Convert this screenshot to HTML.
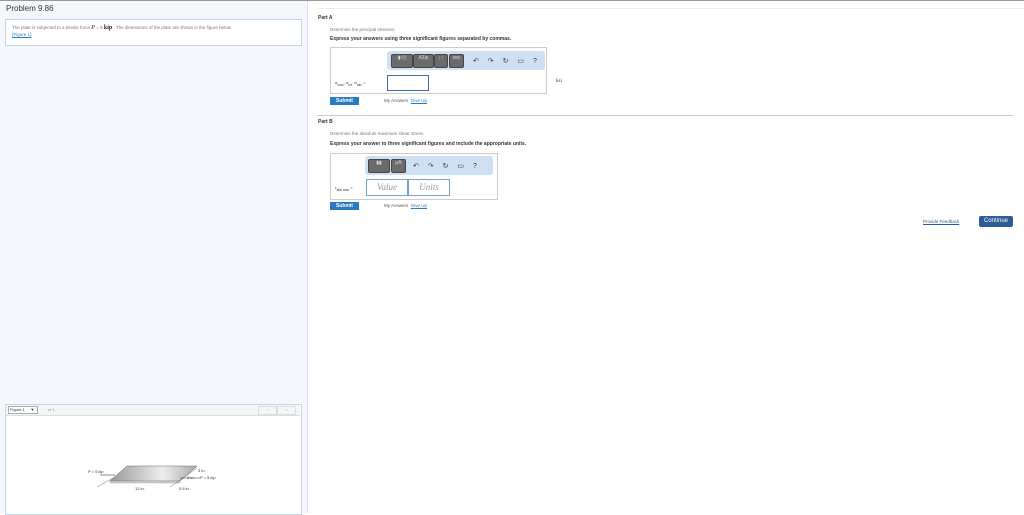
<!DOCTYPE html>
<html><head><style>
body{margin:0;width:1024px;height:513px;background:#fff;font-family:"Liberation Sans",sans-serif;position:relative;overflow:hidden;font-size:5px;color:#333}
.a{position:absolute}
.btn{background:#2a7ac0;color:#fff;font-weight:bold;font-size:5px;text-align:center;line-height:8px}
.tb{background:#cfe0f5;border-radius:3px}
.k{background:#6b6b6b;border:1px solid #444;border-radius:2px;color:#ddd;font-size:5px;text-align:center}
</style></head><body>
<div class="a" style="left:0;top:0;width:1024px;height:1px;background:#999"></div>
<div class="a" style="left:0;top:1px;width:307px;height:512px;background:#f4f8fd;border-right:1px solid #dde5ee"></div>
<div class="a" style="left:6px;top:4px;font-size:8px;color:#333">Problem 9.86</div>
<div class="a" style="left:5px;top:19px;width:295px;height:25px;background:#fff;border:1px solid #c5d3e3"></div>
<div class="a" style="left:12px;top:25px;font-size:4.5px;color:#777;white-space:nowrap">The plate is subjected to a tensile force <i style="font-family:'Liberation Serif';font-size:6px;color:#222">P</i> = 5 <b style="font-family:'Liberation Serif';font-size:6px;color:#222">kip</b> . The dimensions of the plate are shown in the figure below.</div>
<div class="a" style="left:12px;top:32px;font-size:4.5px;color:#2a7ac0;text-decoration:underline">(Figure 1)</div>
<div class="a" style="left:5px;top:404px;width:295px;height:109px;background:#fff;border:1px solid #c5d3e3"></div>
<div class="a" style="left:6px;top:405px;width:294px;height:10px;background:#f6f6f6;border-bottom:1px solid #ddd"></div>
<div class="a" style="left:8px;top:406px;width:28px;height:6px;border:1px solid #aaa;background:#fff;font-size:4px;color:#333;line-height:6px">&nbsp;Figure 1 &nbsp;&nbsp;&nbsp;&nbsp;▼</div>
<div class="a" style="left:48px;top:407px;font-size:4px;color:#888">of 1</div>
<div class="a" style="left:258px;top:406px;width:17px;height:7px;border:1px solid #ddd;font-size:4px;color:#aaa;text-align:center">&lt;</div>
<div class="a" style="left:277px;top:406px;width:17px;height:7px;border:1px solid #ddd;font-size:4px;color:#aaa;text-align:center">&gt;</div>
<svg class="a" style="left:85px;top:460px" width="140" height="35" viewBox="0 0 140 35">
<defs><linearGradient id="g" x1="0" x2="1"><stop offset="0" stop-color="#999"/><stop offset=".6" stop-color="#eee"/><stop offset="1" stop-color="#aaa"/></linearGradient></defs>
<polygon points="42,6 112,6 95,21 25,21" fill="url(#g)" stroke="#666" stroke-width=".5"/>
<rect x="25" y="21" width="70" height="2" fill="#ccc" stroke="#888" stroke-width=".3"/>
<line x1="12" y1="27" x2="30" y2="17" stroke="#555" stroke-width=".4"/>
<line x1="85" y1="27" x2="112" y2="8" stroke="#555" stroke-width=".4"/>
<line x1="15" y1="15" x2="30" y2="15" stroke="#333" stroke-width=".6"/>
<line x1="95" y1="18" x2="115" y2="18" stroke="#333" stroke-width=".6"/>
<text x="3" y="13" font-size="4" fill="#333">P = 5 kip</text>
<text x="115" y="19" font-size="4" fill="#333">P = 5 kip</text>
<text x="113" y="12" font-size="4" fill="#333">3 in.</text>
<text x="102" y="19" font-size="4" fill="#333">2 in.</text>
<text x="50" y="30" font-size="4" fill="#333">12 in.</text>
<text x="94" y="30" font-size="4" fill="#333">0.5 in.</text>
</svg>

<div class="a" style="left:317px;top:8px;width:707px;height:1px;background:#eee"></div>
<div class="a" style="left:318px;top:15px;font-size:5px;font-weight:bold;color:#333">Part A</div>
<div class="a" style="left:330px;top:27px;font-size:4.5px;color:#777">Determine the principal stresses.</div>
<div class="a" style="left:330px;top:36px;font-size:5px;font-weight:bold;color:#333">Express your answers using three significant figures separated by commas.</div>
<div class="a" style="left:330px;top:47px;width:215px;height:45px;border:1px solid #ccc;background:#fff"></div>
<div class="a tb" style="left:387px;top:51px;width:158px;height:19px"></div>
<div class="a k" style="left:391px;top:54px;width:20px;height:12px">▮√▯</div>
<div class="a k" style="left:413px;top:54px;width:19px;height:12px">ΑΣφ</div>
<div class="a k" style="left:434px;top:54px;width:12px;height:12px">↓↑</div>
<div class="a k" style="left:449px;top:54px;width:13px;height:12px">vec</div>
<div class="a" style="left:473px;top:57px;font-size:7px;color:#333;word-spacing:7px">↶ ↷ ↻ ▭ ?</div>
<div class="a" style="left:335px;top:80px;font-size:4px;color:#333">σ<sub>max</sub>, σ<sub>int</sub>, σ<sub>min</sub> =</div>
<div class="a" style="left:387px;top:75px;width:40px;height:14px;border:1px solid #3a6eb0;background:#fff"></div>
<div class="a" style="left:556px;top:79px;font-size:5px;color:#333;font-family:'Liberation Serif'">ksi</div>
<div class="a btn" style="left:330px;top:97px;width:29px;height:8px">Submit</div>
<div class="a" style="left:384px;top:98px;font-size:4.5px;color:#555">My Answers &nbsp;<span style="color:#2a7ac0;text-decoration:underline">Give Up</span></div>

<div class="a" style="left:317px;top:115px;width:697px;height:1px;background:#ccc"></div>
<div class="a" style="left:318px;top:119px;font-size:5px;font-weight:bold;color:#333">Part B</div>
<div class="a" style="left:330px;top:131px;font-size:4.5px;color:#777">Determine the absolute maximum shear stress.</div>
<div class="a" style="left:330px;top:141px;font-size:5px;font-weight:bold;color:#333">Express your answer to three significant figures and include the appropriate units.</div>
<div class="a" style="left:330px;top:153px;width:166px;height:45px;border:1px solid #ccc;background:#fff"></div>
<div class="a tb" style="left:365px;top:156px;width:128px;height:19px"></div>
<div class="a k" style="left:368px;top:159px;width:20px;height:12px">▮▮</div>
<div class="a k" style="left:391px;top:159px;width:13px;height:12px">μA</div>
<div class="a" style="left:413px;top:162px;font-size:7px;color:#333;word-spacing:7px">↶ ↷ ↻ ▭ ?</div>
<div class="a" style="left:335px;top:185px;font-size:4px;color:#333">τ<sub>abs max</sub> =</div>
<div class="a" style="left:366px;top:179px;width:40px;height:15px;border:1px solid #7aa0d0;font-family:'Liberation Serif';font-style:italic;font-size:9px;color:#999;text-align:center;line-height:15px">Value</div>
<div class="a" style="left:408px;top:179px;width:40px;height:15px;border:1px solid #7aa0d0;font-family:'Liberation Serif';font-style:italic;font-size:9px;color:#999;text-align:center;line-height:15px">Units</div>
<div class="a btn" style="left:330px;top:202px;width:29px;height:8px">Submit</div>
<div class="a" style="left:384px;top:203px;font-size:4.5px;color:#555">My Answers &nbsp;<span style="color:#2a7ac0;text-decoration:underline">Give Up</span></div>

<div class="a" style="left:923px;top:219px;font-size:4.5px;color:#2a5a9a;text-decoration:underline">Provide Feedback</div>
<div class="a" style="left:979px;top:216px;width:34px;height:11px;background:#2d5c94;border-radius:2px;color:#fff;font-size:6px;text-align:center;line-height:11px">Continue</div>
</body></html>
